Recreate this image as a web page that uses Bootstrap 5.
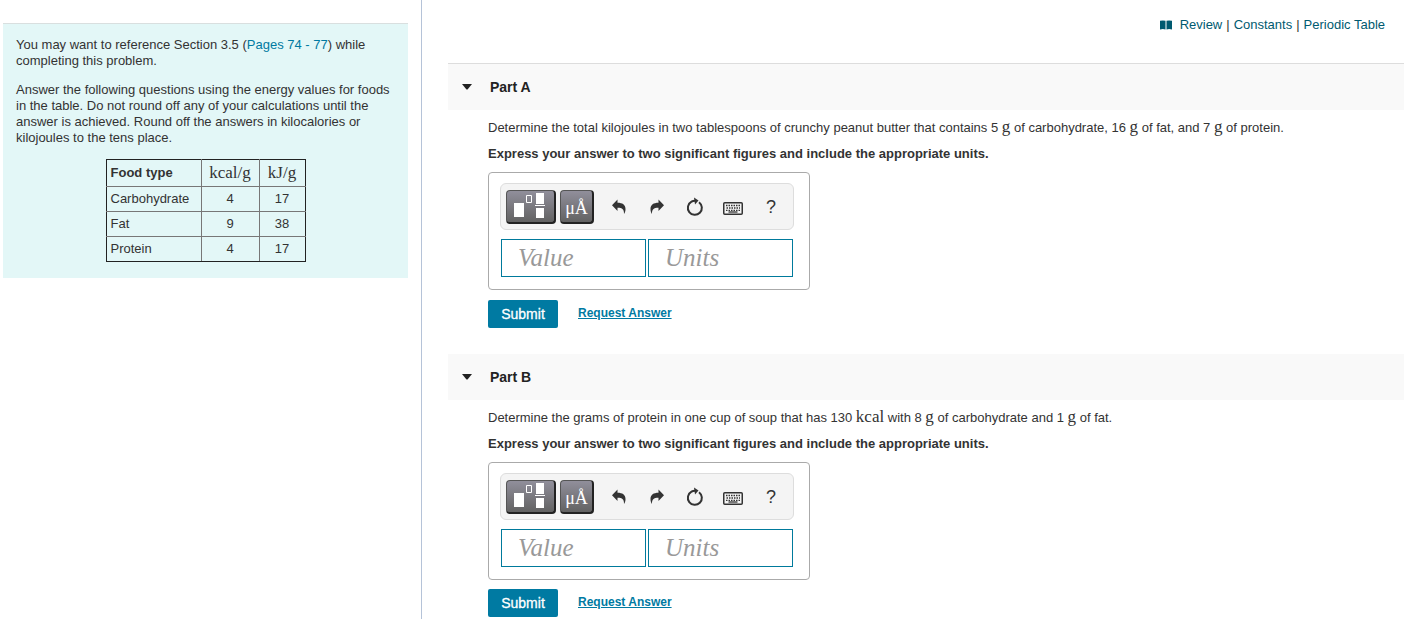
<!DOCTYPE html>
<html lang="en">
<head>
<meta charset="utf-8">
<meta name="viewport" content="width=device-width, initial-scale=1">
<title>Energy values for foods</title>
<link href="https://cdn.jsdelivr.net/npm/bootstrap@5.3.0/dist/css/bootstrap.min.css" rel="stylesheet">
<style>
  body { font: 13px/16px "Liberation Sans", Arial, sans-serif; color: #333; background: #fff; }
  a { color: #007aa2; }
  .sidebar { width: 422px; padding: 23px 13px 0 3px; border-right: 1px solid #b5c3d8; }
  .intro { background: #e3f7f7; border-top: 1px solid #d9dfdf; padding: 13px 13px 16px; }
  .intro p { margin-bottom: 13px; }
  .math { font-family: "Liberation Serif", "Times New Roman", serif; font-size: 17px; font-weight: 400; }
  p .math { line-height: 0; }
  .foods { width: 200px; border-collapse: collapse; line-height: 16px; }
  .foods th, .foods td { border: 1px solid #777; padding: 4px; height: 25px; text-align: center; }
  .foods tr > :first-child { text-align: left; width: 95px; padding-right: 0; border-left-color: #222; }
  .foods tr > :nth-child(2) { width: 58px; padding: 4px 0; }
  .foods tr > :nth-child(3) { padding: 4px 0; border-right-color: #222; }
  .foods thead th { height: 27px; border-top-color: #222; }
  .foods tbody tr:last-child td { border-bottom-color: #222; }
  .content { padding: 16px 10px 0 26px; }
  .toplinks { margin: 0 19px 30px 0; padding-top: 1px; }
  .toplinks a { color: #005a70; text-decoration: none; }
  .parthead { background: #f9f9f9; height: 46px; padding: 0 14px; gap: 18px; }
  .ruled { border-top: 1px solid #ddd; height: 47px; }
  .parthead button { border: 0; background: none; padding: 0; width: 10px; line-height: 0; }
  .parthead h2 { font-size: 14px; font-weight: 700; color: #222; margin: 0; }
  .partbody { padding: 10px 0 26px 40px; }
  .partbody.last { padding-bottom: 0; }
  .partbody p { margin-bottom: 10px; }
  .answer { width: 322px; border: 1px solid #aaa; border-radius: 4px; padding: 10px 15px 12px 11px; margin-bottom: 10px; }
  .last .answer { margin-bottom: 9px; }
  .tools { height: 47px; background: #f4f4f4; border: 1px solid #ddd; border-radius: 6px; padding: 0 0 0 5px; margin-bottom: 9px; }
  .tools button { border: 0; background: none; padding: 0; color: #333; width: 38px; height: 34px; line-height: 0; font-size: 18px; }
  .tools .dark { background: linear-gradient(#918f9b, #626262); border: 1px solid #555; border-right: 2px solid #222; border-bottom: 2px solid #222; border-radius: 4px; color: #fff; width: 34px; margin-right: 4px; }
  .tools .dark.wide { width: 50px; }
  .tools .dark.unit { margin-right: 6px; padding-top: 4px; font: 18px/27px "Liberation Serif", serif; }
  .fields { gap: 2px; padding: 0 1px; }
  .fields input { flex: 1 1 0; min-width: 0; height: 38px; border: 1px solid #007a9c; border-radius: 0; padding: 0 16px; font: italic 25px/32px "Liberation Serif", serif; }
  .fields input::placeholder { color: #999; opacity: 1; }
  .send { width: 70px; height: 28px; background: #007aa2; color: #fff; border: 0; border-radius: 2px; padding: 0; font-size: 14px; line-height: 28px; -webkit-text-stroke: .3px #fff; }
  .request { font-size: 12px; font-weight: 700; margin-bottom: 2px; }
</style>
</head>
<body>
<svg class="d-none" aria-hidden="true">
  <symbol id="template" viewBox="0 0 34 28"><path fill="#fff" d="M0 11h10v14H0zM22 1h8v11h-8zM22 16h8v10h-8zM21 13h10v1H21z"/><path fill="none" stroke="#fff" d="M12.500 3.500h5v7h-5z"/></symbol>
  <symbol id="undo" viewBox="0 0 16 16"><path fill="currentColor" d="M6.500.5v3.300c5 0 8 2 8 6.300 0 2-.5 3.700-1.500 5 .2-4.500-1.500-6.300-6.500-6.300V12L1 6.300z"/></symbol>
  <symbol id="redo" viewBox="0 0 16 16"><path fill="currentColor" d="M9.500.5v3.300c-5 0-8 2-8 6.300 0 2 .5 3.700 1.500 5-.2-4.500 1.500-6.300 6.500-6.300V12L15 6.300z"/></symbol>
  <symbol id="reset" viewBox="0 0 18 20"><path fill="none" stroke="currentColor" stroke-width="2" d="M13 5.200A7 7 0 1 1 5.500 4.700Q7 3.700 9 3.700"/><path fill="currentColor" d="M8 .5 12.500 3.500 9 7.500z"/></symbol>
  <symbol id="keys" viewBox="0 0 20 13"><rect x=".75" y=".75" width="18.500" height="11.500" rx="1" fill="none" stroke="currentColor" stroke-width="1.500"/><path stroke="currentColor" stroke-width="1.300" stroke-dasharray="1.500 1" d="M3 3.500h14M3.500 6h13.500M3 8.300h14"/><path stroke="currentColor" stroke-width="1.300" d="M5.500 10h9"/></symbol>
  <symbol id="caret" viewBox="0 0 10 6"><path d="M0 0h10L5.500 5.500h-1z" fill="#222"/></symbol>
</svg>
<div class="d-flex min-vh-100">
  <aside class="sidebar flex-shrink-0">
    <div class="intro">
      <p>You may want to reference Section 3.5 (<a href="#" class="text-decoration-none">Pages 74 - 77</a>) while completing this problem.</p>
      <p>Answer the following questions using the energy values for foods in the table. Do not round off any of your calculations until the answer is achieved. Round off the answers in kilocalories or kilojoules to the tens place.</p>
      <table class="foods mx-auto">
        <thead><tr><th scope="col">Food type</th><th scope="col" class="math">kcal/g</th><th scope="col" class="math">kJ/g</th></tr></thead>
        <tbody>
          <tr><td>Carbohydrate</td><td>4</td><td>17</td></tr>
          <tr><td>Fat</td><td>9</td><td>38</td></tr>
          <tr><td>Protein</td><td>4</td><td>17</td></tr>
        </tbody>
      </table>
    </div>
  </aside>
  <main class="content flex-grow-1">
    <nav class="toplinks d-flex justify-content-end align-items-center gap-1" aria-label="Resources">
      <a href="#" class="d-flex align-items-center gap-2"><svg width="12" height="10" viewBox="0 0 12 10" aria-hidden="true"><path fill="#005a70" d="M0 .8q3-.8 5.500 0v8.700Q3 8.700 0 9.500zM12 .8Q9 0 6.500.8v8.700q2.500-.8 5.500 0z"/></svg>Review</a><span>|</span><a href="#">Constants</a><span>|</span><a href="#">Periodic Table</a>
    </nav>
    <section>
      <div class="parthead ruled d-flex align-items-center"><button type="button" aria-label="Collapse Part A"><svg width="10" height="6"><use href="#caret"/></svg></button><h2>Part A</h2></div>
      <div class="partbody">
        <p>Determine the total kilojoules in two tablespoons of crunchy peanut butter that contains 5 <span class="math">g</span> of carbohydrate, 16 <span class="math">g</span> of fat, and 7 <span class="math">g</span> of protein.</p>
        <p class="fw-bold">Express your answer to two significant figures and include the appropriate units.</p>
        <div class="answer">
          <div class="tools d-flex align-items-center">
            <button type="button" class="dark wide" aria-label="Templates"><svg width="34" height="28"><use href="#template"/></svg></button>
            <button type="button" class="dark unit" aria-label="Unit symbols">μÅ</button>
            <button type="button" aria-label="Undo"><svg width="16" height="16"><use href="#undo"/></svg></button>
            <button type="button" aria-label="Redo"><svg width="16" height="16"><use href="#redo"/></svg></button>
            <button type="button" aria-label="Reset"><svg width="18" height="20"><use href="#reset"/></svg></button>
            <button type="button" aria-label="Keyboard shortcuts" class="pt-1"><svg width="20" height="13"><use href="#keys"/></svg></button>
            <button type="button" aria-label="Help">?</button>
          </div>
          <div class="fields d-flex"><input type="text" placeholder="Value" aria-label="Part A value"><input type="text" placeholder="Units" aria-label="Part A units"></div>
        </div>
        <div class="d-flex align-items-center"><button type="button" class="send">Submit</button><a href="#" class="request ms-3 ps-1">Request Answer</a></div>
      </div>
    </section>
    <section>
      <div class="parthead d-flex align-items-center"><button type="button" aria-label="Collapse Part B"><svg width="10" height="6"><use href="#caret"/></svg></button><h2>Part B</h2></div>
      <div class="partbody last">
        <p>Determine the grams of protein in one cup of soup that has 130 <span class="math">kcal</span> with 8 <span class="math">g</span> of carbohydrate and 1 <span class="math">g</span> of fat.</p>
        <p class="fw-bold">Express your answer to two significant figures and include the appropriate units.</p>
        <div class="answer">
          <div class="tools d-flex align-items-center">
            <button type="button" class="dark wide" aria-label="Templates"><svg width="34" height="28"><use href="#template"/></svg></button>
            <button type="button" class="dark unit" aria-label="Unit symbols">μÅ</button>
            <button type="button" aria-label="Undo"><svg width="16" height="16"><use href="#undo"/></svg></button>
            <button type="button" aria-label="Redo"><svg width="16" height="16"><use href="#redo"/></svg></button>
            <button type="button" aria-label="Reset"><svg width="18" height="20"><use href="#reset"/></svg></button>
            <button type="button" aria-label="Keyboard shortcuts" class="pt-1"><svg width="20" height="13"><use href="#keys"/></svg></button>
            <button type="button" aria-label="Help">?</button>
          </div>
          <div class="fields d-flex"><input type="text" placeholder="Value" aria-label="Part B value"><input type="text" placeholder="Units" aria-label="Part B units"></div>
        </div>
        <div class="d-flex align-items-center"><button type="button" class="send">Submit</button><a href="#" class="request ms-3 ps-1">Request Answer</a></div>
      </div>
    </section>
  </main>
</div>
<script src="https://cdn.jsdelivr.net/npm/bootstrap@5.3.0/dist/js/bootstrap.bundle.min.js"></script>
</body>
</html>
